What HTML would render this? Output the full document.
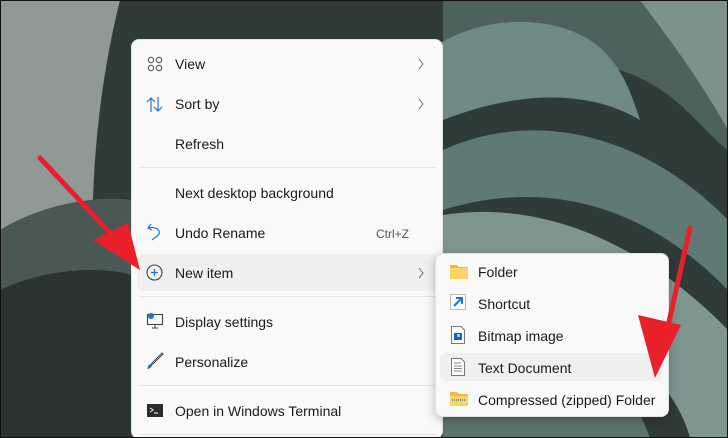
<!DOCTYPE html>
<html><head><style>
*{margin:0;padding:0;box-sizing:border-box}
html,body{width:728px;height:438px;overflow:hidden}
body{position:relative;font-family:"Liberation Sans",sans-serif;background:#3a4643}
.bg{position:absolute;left:0;top:0}
.menu{position:absolute;left:131px;top:39px;width:312px;height:400px;background:#f9f9f9;border-radius:8px;border:1px solid #e2e2e2;overflow:hidden}
.it{position:absolute;left:43px;font-size:14px;color:#1a1a1a;line-height:16px}
.sep{position:absolute;left:6px;right:6px;height:1px;background:#e6e6e6}
.chev{position:absolute;left:285px}
.hl{position:absolute;background:#f0f0f0;border-radius:5px}
.sub{position:absolute;left:435px;top:253px;width:234px;height:164px;background:#f9f9f9;border-radius:8px;border:1px solid #e2e2e2;box-shadow:0 3px 10px rgba(0,0,0,.25)}
.si{position:absolute;left:42px;font-size:14px;color:#1a1a1a;line-height:16px}
.ic{position:absolute}
.frame{position:absolute;left:0;top:0;width:728px;height:438px;border:1px solid #111;pointer-events:none}
</style></head><body>
<svg class="bg" width="728" height="438" viewBox="0 0 728 438">
<rect width="728" height="438" fill="#2f3b38"/>
<path d="M0 0H120C105 60 95 130 93 200C60 205 30 215 0 230Z" fill="#8f9996"/>
<path d="M0 230C40 205 95 195 131 200V438H0Z" fill="#4a5855"/>
<path d="M0 290C40 270 100 265 131 275V438H0Z" fill="#29332f"/>
<path d="M443 100C500 60 560 50 620 70C680 90 700 130 728 150V0H443Z" fill="#4e625d"/>
<path d="M430 50C470 20 540 10 590 40C620 60 630 90 640 120C590 90 520 90 443 120Z" fill="#6f8a84"/>
<path d="M443 150C530 110 640 130 728 220V290C640 200 540 180 443 210Z" fill="#5f7a74"/>
<path d="M443 215C540 200 640 240 728 330V438H690C670 360 560 290 443 275Z" fill="#7f9590"/>
<path d="M443 280C520 290 610 330 650 438H443Z" fill="#5c726c"/>
<path d="M640 0H728V130C700 80 670 40 640 0Z" fill="#7d918d"/>
</svg>
<div class="menu">
 <svg class="ic" style="left:15px;top:16px" width="16" height="16"><g fill="none" stroke="#555" stroke-width="1.1"><circle cx="4" cy="4" r="2.7"/><circle cx="12" cy="4" r="2.7"/><circle cx="4" cy="12" r="2.7"/><circle cx="12" cy="12" r="2.7"/></g></svg>
 <div class="it" style="top:16px">View</div><svg class="chev" style="top:18px" width="8" height="12"><path d="M2 1L6 6L2 11" fill="none" stroke="#666"/></svg>
 <svg class="ic" style="left:14px;top:56px" width="18" height="17"><g fill="none" stroke="#1976d2" stroke-width="1.2"><path d="M5 16V2M1 6L5 2L9 6"/><path d="M12 1V15M8 11L12 15L16 11"/></g></svg>
 <div class="it" style="top:56px">Sort by</div><svg class="chev" style="top:58px" width="8" height="12"><path d="M2 1L6 6L2 11" fill="none" stroke="#666"/></svg>
 <div class="it" style="top:96px">Refresh</div>
 <div class="sep" style="top:127px"></div>
 <div class="it" style="top:145px">Next desktop background</div>
 <svg class="ic" style="left:14px;top:183px" width="18" height="18"><path d="M5 1L2 5L6 7M2 5C9 3 15 7 13 11C11 14 8 15 6 17" fill="none" stroke="#1976d2" stroke-width="1.2"/></svg>
 <div class="it" style="top:185px">Undo Rename</div>
 <div class="it" style="top:186px;left:244px;font-size:12px;color:#555">Ctrl+Z</div>
 <div class="hl" style="left:5px;top:214px;width:300px;height:37px"></div>
 <svg class="ic" style="left:14px;top:224px" width="18" height="18"><circle cx="8.5" cy="8.5" r="7.5" fill="none" stroke="#444" stroke-width="1.1"/><path d="M8.5 5V12M5 8.5H12" stroke="#1976d2" stroke-width="1.2"/></svg>
 <div class="it" style="top:225px">New item</div><svg class="chev" style="top:227px" width="8" height="12"><path d="M2 1L6 6L2 11" fill="none" stroke="#666"/></svg>
 <div class="sep" style="top:256px"></div>
 <svg class="ic" style="left:14px;top:272px" width="18" height="18"><rect x="1.5" y="2.5" width="15" height="10" fill="none" stroke="#444" stroke-width="1.1"/><path d="M6 16H12M9 12V16" stroke="#444"/><circle cx="5" cy="4" r="3" fill="#1976d2"/></svg>
 <div class="it" style="top:274px">Display settings</div>
 <svg class="ic" style="left:14px;top:312px" width="18" height="18"><path d="M16 1L6 11L5 13L7 12L17 2Z" fill="none" stroke="#444"/><path d="M5 12C2 12 2 15 1 17C4 17 6 15 6 13Z" fill="#1976d2"/></svg>
 <div class="it" style="top:314px">Personalize</div>
 <div class="sep" style="top:345px"></div>
 <svg class="ic" style="left:15px;top:364px" width="16" height="13"><rect width="16" height="13" fill="#2b2b2b"/><path d="M3 4L6 6L3 8M7 9H11" stroke="#fff" stroke-width="1"/></svg>
 <div class="it" style="top:363px">Open in Windows Terminal</div>
 <div class="sep" style="top:394px"></div>
</div>
<div class="sub">
 <svg class="ic" style="left:14px;top:10px" width="18" height="15"><path d="M0 1H7L9 3H18V15H0Z" fill="#f0b93a"/><path d="M0 4H18V15H0Z" fill="#fcd466"/></svg>
 <div class="si" style="top:10px">Folder</div>
 <svg class="ic" style="left:14px;top:40px" width="16" height="16"><rect x=".5" y=".5" width="15" height="15" fill="#fff" stroke="#bbb"/><path d="M4 12L12 4M6 4H12V10" fill="none" stroke="#1976d2" stroke-width="2"/></svg>
 <div class="si" style="top:42px">Shortcut</div>
 <svg class="ic" style="left:15px;top:72px" width="14" height="18"><path d="M.5 .5H10L13.5 4V17.5H.5Z" fill="#fff" stroke="#777"/><rect x="3" y="7" width="8" height="7" fill="#1565c0"/><rect x="6" y="8" width="3" height="3" fill="#90caf9"/></svg>
 <div class="si" style="top:74px">Bitmap image</div>
 <div class="hl" style="left:4px;top:99px;width:223px;height:28px"></div>
 <svg class="ic" style="left:15px;top:104px" width="14" height="18"><path d="M.5 .5H10L13.5 4V17.5H.5Z" fill="#fff" stroke="#777"/><path d="M3 5H10M3 8H11M3 10.5H11M3 13H11" stroke="#888"/></svg>
 <div class="si" style="top:106px">Text Document</div>
 <svg class="ic" style="left:14px;top:137px" width="18" height="15"><path d="M0 1H7L9 3H18V15H0Z" fill="#f0b93a"/><path d="M0 5H18V15H0Z" fill="#fcd466"/><path d="M2 9H16" stroke="#888" stroke-dasharray="1 1" stroke-width="2"/></svg>
 <div class="si" style="top:138px">Compressed (zipped) Folder</div>
</div>
<svg class="bg" width="728" height="438" style="pointer-events:none">
<path d="M40 158L128 252" stroke="#e8202a" stroke-width="5" stroke-linecap="round"/>
<path d="M140 270L93 240L128 223Z" fill="#e8202a"/>
<path d="M690 228L666 335" stroke="#e8202a" stroke-width="5" stroke-linecap="round"/>
<path d="M655 378L638 315L681 325Z" fill="#e8202a"/>
</svg>
<div class="frame"></div>
</body></html>
